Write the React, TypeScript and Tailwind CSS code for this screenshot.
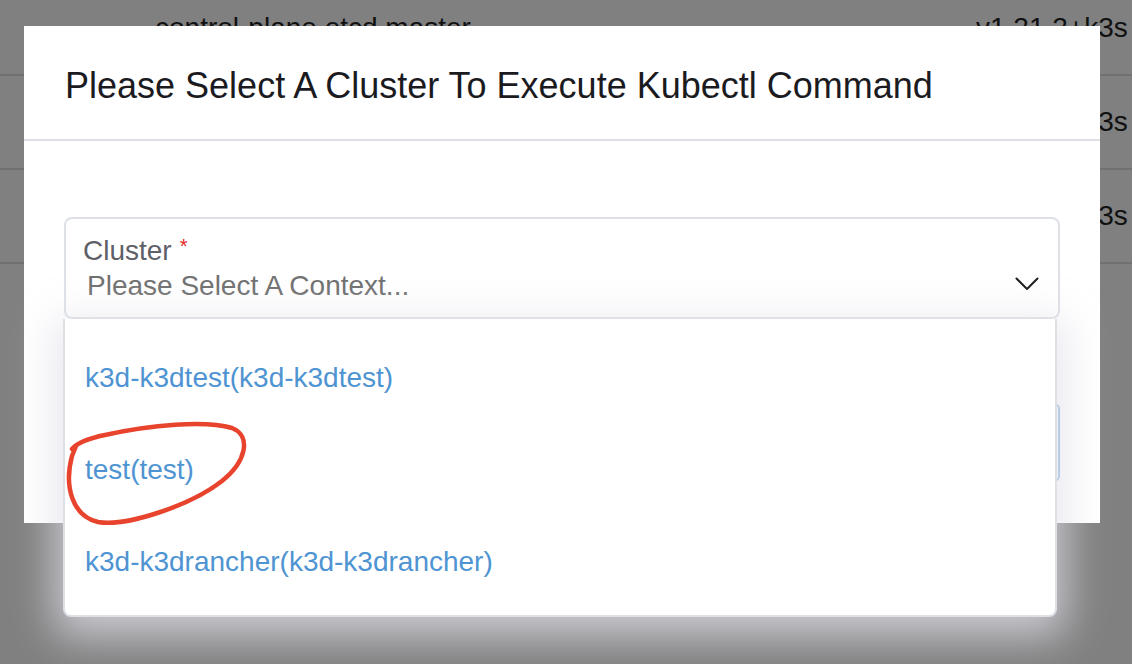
const contexts = [
  "k3d-k3dtest(k3d-k3dtest)",
  "test(test)",
  "k3d-k3drancher(k3d-k3drancher)",
];

const nodes = ["control-plane,etcd,master", "control-plane,etcd,master", "control-plane,etcd,master"];

export default function App() {
  return (
    <div
      className="relative h-[664px] w-[1132px] overflow-hidden bg-[#808080] text-[#111]"
      style={{ fontFamily: '"Liberation Sans", Arial, sans-serif' }}
    >
      {/* Table behind the overlay */}
      <div className="-mt-[18px]">
        {nodes.map((role, i) => (
          <div key={i} className="flex h-[94px] items-center border-b-2 border-[#707070] text-[28px]">
            <div className="w-[976px] pl-[155px]">{role}</div>
            <div className="whitespace-nowrap">v1.21.2+k3s</div>
          </div>
        ))}
      </div>

      {/* Modal */}
      <div className="absolute left-[24px] top-[26px] flex h-[497px] w-[1076px] flex-col bg-white">
        <div className="flex h-[115px] shrink-0 items-center border-b-2 border-[#dde1e6] pl-[41px] pt-[7px] text-[36px] text-[#1b1b1f]">
          Please Select A Cluster To Execute Kubectl Command
        </div>
        <div className="flex flex-col gap-[84px] px-[40px] pt-[76px]">
          <div className="flex h-[102px] items-center rounded-[8px] border-2 border-[#dde1e6] pl-[17px] pr-[19px]">
            <div className="flex flex-1 flex-col">
              <div className="flex items-start text-[28px] leading-[35px] text-[#5e5f68]">
                Cluster
                <span className="ml-[8px] text-[20px] leading-[26px] text-[#e3291f]">*</span>
              </div>
              <div className="pl-[4px] text-[28px] leading-[35px] text-[#707070]">
                Please Select A Context...
              </div>
            </div>
            <svg className="mt-[32px]" width="24" height="14" viewBox="0 0 24 14">
              <path d="M1.5 1.5 L12 12 L22.5 1.5" fill="none" stroke="#1b1b1f" strokeWidth="2" strokeLinecap="round" strokeLinejoin="round" />
            </svg>
          </div>
          <div className="h-[79px] rounded-[6px] border-2 border-[#8fb8e6]" />
        </div>
      </div>

      {/* Dropdown menu */}
      <div className="absolute left-[63px] top-[319px] w-[994px] rounded-b-[8px] border-2 border-t-0 border-[#dde1e6] bg-white pb-[7px] pt-[13px] shadow-[0_10px_40px_10px_rgba(225,225,235,0.75)]">
        {contexts.map((c) => (
          <div key={c} className="flex h-[92px] items-center pl-[20px] text-[28px] text-[#4f94d2]">
            {c}
          </div>
        ))}
      </div>

      {/* Hand-drawn annotation */}
      <svg className="pointer-events-none absolute left-0 top-0" width="1132" height="664" viewBox="0 0 1132 664">
        <path
          d="M 72 449 C 78 442, 90 438, 105 435 C 150 425, 205 420, 232 428 C 252 436, 246 462, 222 481 C 190 506, 125 527, 98 522 C 72 516, 64 486, 72 456 L 76 446"
          fill="none"
          stroke="#e8432d"
          strokeWidth="4.5"
          strokeLinecap="round"
          strokeLinejoin="round"
        />
      </svg>
    </div>
  );
}
